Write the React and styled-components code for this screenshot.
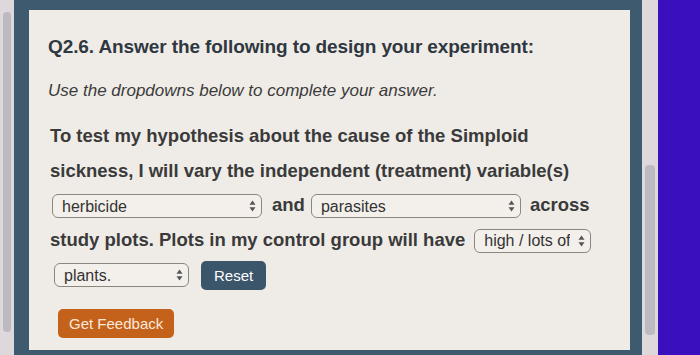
import React from 'react';
import styled, { createGlobalStyle } from 'styled-components';

const GlobalStyle = createGlobalStyle`
  html, body {
    margin: 0;
    padding: 0;
    width: 700px;
    height: 355px;
    overflow: hidden;
    background: #3d5a6e;
    font-family: "Liberation Sans", Arial, sans-serif;
  }
`;

const Screen = styled.div`
  display: flex;
  width: 700px;
  height: 355px;
`;

const Strip = styled.div`
  width: ${props => props.width}px;
  flex: none;
  background: #dcd8dc;
  padding: 0 ${props => props.side}px;
  box-sizing: border-box;
`;

const Thumb = styled.div`
  width: 100%;
  height: ${props => props.height}px;
  margin-top: ${props => props.offset}px;
  border-radius: 4px;
  background: #bdb9c0;
`;

const Frame = styled.div`
  flex: 1;
  background: #3d5a6e;
  padding: 10px 12px 5px 15px;
  display: flex;
`;

const Panel = styled.div`
  flex: 1;
  background: #efece7;
  padding: 26px 20px 0 19px;
  color: #3a3a3a;
`;

const Purple = styled.div`
  width: 42px;
  flex: none;
  background: #3a0fbd;
`;

const Heading = styled.h2`
  margin: 0;
  font-size: 19px;
  font-weight: bold;
  color: #2f3740;
  letter-spacing: -0.1px;
`;

const Hint = styled.p`
  margin: 23px 0 0;
  font-size: 17px;
  font-style: italic;
  color: #3b3b3b;
`;

const Question = styled.div`
  margin-top: 18px;
  padding-left: 2px;
  font-size: 18.5px;
  font-weight: bold;
  line-height: 34.5px;
  color: #3a3a3a;
`;

const SelectWrap = styled.span`
  position: relative;
  display: inline-block;
  vertical-align: middle;
  margin: ${props => props.margin || '0'};
  line-height: normal;
`;

const Select = styled.select`
  appearance: none;
  display: block;
  width: ${props => props.width}px;
  height: 24px;
  box-sizing: border-box;
  border: 1px solid #8a8680;
  border-radius: 6px;
  background: #f3f0eb;
  padding: 0 20px 0 9px;
  font-family: "Liberation Sans", Arial, sans-serif;
  font-size: 16px;
  color: #333;
  outline: none;
`;

const Arrows = styled.svg`
  position: absolute;
  right: 6px;
  top: 6px;
  pointer-events: none;
`;

const Button = styled.button`
  display: inline-block;
  vertical-align: middle;
  border: none;
  border-radius: 5px;
  background: ${props => props.bg};
  color: ${props => props.fg};
  font-family: "Liberation Sans", Arial, sans-serif;
  font-size: 15px;
  height: 29px;
  padding: 0 ${props => props.pad}px;
  margin-left: ${props => props.ml || 0}px;
`;

const Footer = styled.div`
  margin-top: 17px;
`;

function Dropdown({ width, value, margin }) {
  return (
    <SelectWrap margin={margin}>
      <Select width={width} defaultValue={value}>
        <option>{value}</option>
      </Select>
      <Arrows width="7" height="12" viewBox="0 0 7 12">
        <path d="M3.5 0.5 L6.5 4.8 H0.5 Z" fill="#555" />
        <path d="M3.5 11.5 L6.5 7.2 H0.5 Z" fill="#555" />
      </Arrows>
    </SelectWrap>
  );
}

export default function App() {
  return (
    <>
      <GlobalStyle />
      <Screen>
        <Strip width={14} side={3}>
          <Thumb height={320} offset={12} />
        </Strip>
        <Frame>
          <Panel>
            <Heading>Q2.6. Answer the following to design your experiment:</Heading>
            <Hint>Use the dropdowns below to complete your answer.</Hint>
            <Question>
              To test my hypothesis about the cause of the Simploid sickness, I will vary the
              independent (treatment) variable(s)
              <br />
              <Dropdown width={210} value="herbicide" margin="0 10px 0 2px" />
              and
              <Dropdown width={210} value="parasites" margin="0 9px 0 6px" />
              across study plots. Plots in my control group will have
              <Dropdown width={117} value="high / lots of" margin="0 0 0 9px" />
              <br />
              <Dropdown width={135} value="plants." margin="0 0 0 4px" />
              <Button bg="#3b566b" fg="#ffffff" pad={13} ml={12}>Reset</Button>
            </Question>
            <Footer>
              <Button bg="#c4621b" fg="#fbe8da" pad={11} ml={10}>Get Feedback</Button>
            </Footer>
          </Panel>
        </Frame>
        <Strip width={16} side={3}>
          <Thumb height={170} offset={165} />
        </Strip>
        <Purple />
      </Screen>
    </>
  );
}
